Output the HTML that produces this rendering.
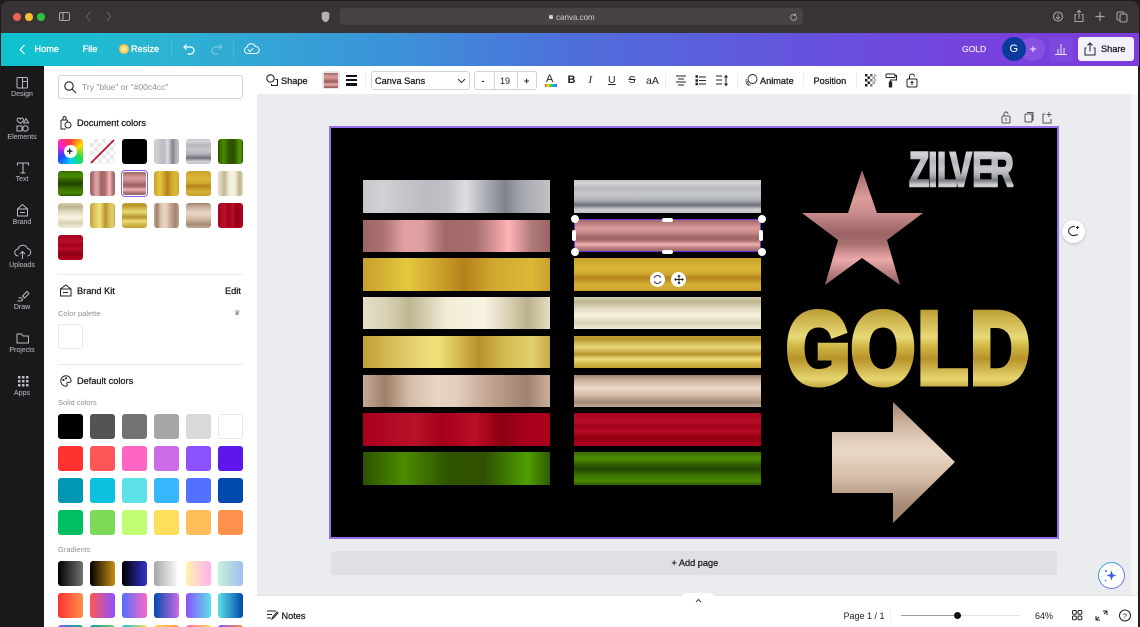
<!DOCTYPE html>
<html><head><meta charset="utf-8"><title>Canva</title>
<style>
*{box-sizing:border-box}
html,body{margin:0;padding:0;width:1140px;height:627px;overflow:hidden;background:#241a1d;font-family:"Liberation Sans",sans-serif}
.a{position:absolute}
.t{position:absolute;white-space:nowrap;line-height:12px}
.m{font-size:9.2px;font-weight:normal;-webkit-text-stroke:.28px currentColor}
#w{position:relative;width:1140px;height:627px;overflow:hidden;filter:blur(.3px)}
.s{position:absolute;width:25px;height:25px;border-radius:3px}
.b{position:absolute;width:187px;height:33px}
.n{position:absolute;left:0;width:44px;text-align:center;color:#a9abae;font-size:7px;line-height:8px;-webkit-text-stroke:.12px currentColor}
svg{position:absolute;overflow:visible}
:root{
--silver:#c5c7cb 0%,#d0d2d6 10%,#c4c6ca 22%,#b9bcc1 35%,#bfc1c6 45%,#dcdee1 55%,#a9acb3 66%,#80838c 76%,#a5a8ae 85%,#c0c2c6 100%;
--rose:#9c6565 0%,#a86f70 10%,#e0a0a3 22%,#dc9fa0 32%,#a06868 44%,#a66f6f 60%,#ffb3b5 78%,#b07a7a 90%,#9a6464 100%;
--gold:#c8a02b 0%,#d6b434 12%,#e4c83f 24%,#cda42c 40%,#b5811c 54%,#d0a92f 70%,#dbb936 90%,#c9a02c 100%;
--cream:#e5dfc6 0%,#d9d2b5 12%,#bfb693 25%,#f1edd8 45%,#f7f3e2 65%,#d9d0b4 78%,#bdb08d 88%,#e4dcc3 100%;
--gold2:#c2a032 0%,#d2b651 12%,#e5d572 28%,#f0e27a 40%,#b8922a 62%,#d2b94f 75%,#e2d06e 90%,#c9ab45 100%;
--bronze:#c4ab96 0%,#a17f6b 12%,#d5bda8 25%,#e7d5c4 40%,#e2cfbe 50%,#bf9f8a 70%,#a08270 88%,#c9af9b 100%;
--red:#a8001e 0%,#b7122a 28%,#a4001a 42%,#bc0d28 60%,#8c0010 74%,#a4001c 85%,#ad001f 100%;
--green:#2e5200 0%,#4a8c00 22%,#2f5500 45%,#305000 65%,#4ea000 88%,#2f5a00 100%;
--vsilver:#c4c6ca 0%,#d3d5d8 10%,#b4b7bc 25%,#c6c8cc 42%,#b0b3b8 60%,#6e7178 76%,#d0d2d6 90%,#c0c2c6 100%;
--vrose:#a06868 0%,#dc9c9c 25%,#c98b8c 38%,#9c6464 55%,#a76f70 64%,#f3b0b0 76%,#b67e7e 88%,#8f5e5e 100%;
--vgold:#c9a02a 0%,#d9b838 30%,#cfa82f 48%,#b5821c 60%,#d5b235 82%,#c9a02c 100%;
--vcream:#d8d0b0 0%,#bdb48f 15%,#e0d9c0 35%,#f8f4e2 58%,#d9d2b5 80%,#f0ecd8 100%;
--vgold2:#c2a032 0%,#b8962c 10%,#e8da78 35%,#b8922a 57%,#ecdc7a 72%,#d4bb4c 85%,#c2a032 100%;
--vbronze:#a08270 0%,#c8ad98 15%,#ead8c6 40%,#d6bda8 62%,#a68a76 85%,#c4ab96 100%;
--vred:#a8001e 0%,#b70f28 25%,#a4001a 40%,#b80a26 55%,#8c0010 75%,#a4001c 88%,#b00020 100%;
--vgreen:#3a6a00 0%,#4a9000 20%,#2f5c00 38%,#234400 52%,#3a7000 70%,#4a8800 88%,#2f5a00 100%;
}
.silver{background:linear-gradient(90deg,var(--silver))}.rose{background:linear-gradient(90deg,var(--rose))}.gold{background:linear-gradient(90deg,var(--gold))}.cream{background:linear-gradient(90deg,var(--cream))}.gold2{background:linear-gradient(90deg,var(--gold2))}.bronze{background:linear-gradient(90deg,var(--bronze))}.red{background:linear-gradient(90deg,var(--red))}.green{background:linear-gradient(90deg,var(--green))}
.vsilver{background:linear-gradient(180deg,var(--vsilver))}.vrose{background:linear-gradient(180deg,var(--vrose))}.vgold{background:linear-gradient(180deg,var(--vgold))}.vcream{background:linear-gradient(180deg,var(--vcream))}.vgold2{background:linear-gradient(180deg,var(--vgold2))}.vbronze{background:linear-gradient(180deg,var(--vbronze))}.vred{background:linear-gradient(180deg,var(--vred))}.vgreen{background:linear-gradient(180deg,var(--vgreen))}
.h{position:absolute;background:#fff}
.dot{position:absolute;width:8px;height:8px;border-radius:50%;background:#fff}
</style></head><body><div id="w">

<!-- browser chrome -->
<div class="a" style="left:1px;top:1px;width:1138px;height:32px;background:#383335;border-radius:8px 8px 0 0"></div>
<div class="a" style="left:13px;top:13px;width:7.500px;height:7.500px;border-radius:50%;background:#ee5f57"></div>
<div class="a" style="left:25px;top:13px;width:7.500px;height:7.500px;border-radius:50%;background:#f5bd2f"></div>
<div class="a" style="left:37px;top:13px;width:7.500px;height:7.500px;border-radius:50%;background:#29c440"></div>
<svg style="left:0;top:0" width="1140" height="33" fill="none" stroke="#a5a2a3" stroke-width="1.100">
<rect x="59.500" y="12.500" width="10" height="8" rx="1.500"/><path d="M63 12.500v8"/><path d="M90 12l-3.500 4.500 3.500 4.500" stroke="#615c5e"/><path d="M107 12l3.500 4.500-3.500 4.500" stroke="#615c5e"/>
<path d="M322 13l3.500-1.200 3.500 1.200v4.500c0 2.500-2 3.800-3.500 4.500-1.500-.7-3.500-2-3.500-4.500z" fill="#b5b2b3" stroke="#b5b2b3" stroke-width=".6"/>
<circle cx="1058" cy="16.500" r="4.500"/><path d="M1058 13.500v5M1056 17l2 2 2-2" stroke-width=".9"/>
<path d="M1076.500 14.500h-1.500v7h8v-7h-1.500M1079 18.500v-8M1077 12.500l2-2 2 2"/>
<path d="M1100 12v9M1095.500 16.500h9" stroke-width="1.200"/>
<rect x="1117" y="12" width="7" height="8" rx="1.500"/><rect x="1120" y="14" width="7" height="8" rx="1.500" fill="#383335"/>
</svg>
<div class="a" style="left:340px;top:8px;width:463px;height:17px;background:#474244;border-radius:4px"></div>
<div class="a" style="left:548.500px;top:15px;width:4px;height:4px;background:#cfcdce;border-radius:1px"></div>
<div class="t" style="left:556px;top:18px;margin-top:-6px;color:#cfcdce;font-size:8px">canva.com</div>
<svg style="left:790px;top:13px" width="8" height="8" fill="none" stroke="#a5a2a3" stroke-width=".9"><path d="M6.500 3.500a3 3 0 1 1-1-1.500M5.500 .5v2h-2"/></svg>

<!-- top bar -->
<div class="a" style="left:1px;top:33px;width:1138px;height:33px;background:linear-gradient(90deg,#0dc3cf 0%,#2db3d2 15%,#3c91d8 35%,#4e6fdb 50%,#6256dd 68%,#7542dc 85%,#7d3cdb 100%)"></div>
<svg style="left:0;top:33px" width="270" height="33" fill="none" stroke="#fff" stroke-width="1.200">
<path d="M24.500 12l-4.200 4.500 4.200 4.500"/>
<path d="M184.500 14h6a3.500 3.500 0 0 1 0 7h-3M186.500 11.500l-2.500 2.500 2.500 2.500"/>
<path d="M221.500 14h-6a3.500 3.500 0 0 0 0 7h3M219.500 11.500l2.500 2.500-2.500 2.500" stroke-opacity=".35"/>
<path d="M171.500 8v17M233.500 8v17" stroke-opacity=".15" stroke-width="1"/>
<path d="M247.500 20.500a3.200 3.200 0 0 1-.5-6.300 4.500 4.500 0 0 1 8.500-.7 3.500 3.500 0 0 1 .5 7z M248 16.500l2 2 3.200-3.200" stroke-width="1"/>
</svg>
<div class="t m" style="left:34.500px;top:43px;color:#fff">Home</div>
<div class="t m" style="left:82.500px;top:43px;color:#fff">File</div>
<div class="a" style="left:119px;top:44px;width:10px;height:10px;border-radius:50%;background:radial-gradient(#ffe9a0 20%,#f6b93b 70%)"></div>
<div class="t m" style="left:131px;top:43px;color:#fff">Resize</div>
<div class="t" style="left:962px;top:43px;color:#e9def8;font-size:8.500px;-webkit-text-stroke:.25px currentColor">GOLD</div>
<div class="a" style="left:1020px;top:37px;width:25px;height:24px;border-radius:12px;background:#8650e2"></div>
<div class="t" style="left:1029.500px;top:43px;color:#fff;font-size:12px">+</div>
<div class="a" style="left:1002px;top:37px;width:24px;height:24px;border-radius:50%;background:#0a3b9c"></div>
<div class="t" style="left:1009.500px;top:43px;color:#fff;font-size:11px">G</div>
<div class="a" style="left:1049px;top:37px;width:24px;height:24px;border-radius:3px;background:#7d48e0"></div>
<svg style="left:1055px;top:43px" width="13" height="12" fill="none" stroke="#ece3fb" stroke-width="1"><path d="M0 11.500h12M3 11V6M6 11V1M9 11V5"/></svg>
<div class="a" style="left:1078px;top:37px;width:56px;height:24px;border-radius:3px;background:#f4f0fc"></div>
<svg style="left:1084px;top:42px" width="13" height="14" fill="none" stroke="#222" stroke-width="1"><path d="M2.500 6H1v7h10V6H9.500M6 9.500V1M3.500 3.500L6 1l2.500 2.500"/></svg>
<div class="t m" style="left:1101px;top:43px;color:#222">Share</div>

<!-- sidebar -->
<div class="a" style="left:1px;top:66px;width:43px;height:561px;background:#18191b"></div>
<svg style="left:0;top:66px" width="44" height="340" fill="none" stroke="#b9bbbe" stroke-width="1">
<rect x="17" y="11.500" width="10.500" height="10.500" rx="1"/><path d="M22.500 11.500V22M22.500 15.500h5"/>
<path d="M17.500 55c-1-1.500 0-3 1.300-3 .8 0 1.200.5 1.500 1 .3-.5.700-1 1.500-1 1.300 0 2.300 1.500 1.300 3l-2.800 2.500zM26 52.500l2.500 4.500h-5z"/><rect x="17" y="60" width="5" height="5"/><circle cx="25.500" cy="62.500" r="2.700"/>
<path d="M17.500 99.500v-2.500h11v2.500M23 97v10M20.500 107h5" stroke-width="1.100"/>
<path d="M17.500 143h10v7h-10zM17.500 143l5-4.500 5 4.500M20 146.500h5"/>
<path d="M18.500 190a3.500 3.500 0 0 1-.5-7 5 5 0 0 1 9.500-.5 3.800 3.800 0 0 1 0 7.500M22.500 193v-7M20 188l2.500-2.500L25 188"/>
<path d="M22.500 230l4.500-4.500 2 2-4.500 4.500zM18.500 232c3-1 6 2 2.500 3h-3.500"/>
<path d="M17 277v-9h4.500l1.500 2h5.500v7z"/>
</svg>
<svg style="left:18px;top:376px" width="11" height="11" fill="#b9bbbe"><rect x="0" y="0" width="2.500" height="2.500"/><rect x="4" y="0" width="2.500" height="2.500"/><rect x="8" y="0" width="2.500" height="2.500"/><rect x="0" y="4" width="2.500" height="2.500"/><rect x="4" y="4" width="2.500" height="2.500"/><rect x="8" y="4" width="2.500" height="2.500"/><rect x="0" y="8" width="2.500" height="2.500"/><rect x="4" y="8" width="2.500" height="2.500"/><rect x="8" y="8" width="2.500" height="2.500"/></svg>
<div class="n" style="top:91px">Design</div>
<div class="n" style="top:134px">Elements</div>
<div class="n" style="top:176px">Text</div>
<div class="n" style="top:219px">Brand</div>
<div class="n" style="top:262px">Uploads</div>
<div class="n" style="top:304px">Draw</div>
<div class="n" style="top:347px">Projects</div>
<div class="n" style="top:390px">Apps</div>

<!-- panel -->
<div class="a" style="left:44px;top:66px;width:213px;height:561px;background:#fff"></div>
<div class="a" style="left:58px;top:75px;width:185px;height:24px;border:1px solid #d3d4d7;border-radius:3px"></div>
<svg style="left:64px;top:81px" width="13" height="13" fill="none" stroke="#222" stroke-width="1.100"><circle cx="5" cy="5" r="4.200"/><path d="M8 8l4 4"/></svg>
<div class="t" style="left:82px;top:81px;color:#8e9094;font-size:8.500px">Try "blue" or "#00c4cc"</div>
<svg style="left:60px;top:116px" width="12" height="14" fill="none" stroke="#222" stroke-width="1"><path d="M1 4h6l1 2M1 4v9h5M3 4V2a1.500 1.500 0 0 1 3 0v2"/><circle cx="8" cy="9" r="3"/></svg>
<div class="t m" style="left:77px;top:117px;color:#222">Document colors</div>

<div class="s" style="left:58px;top:139px;background:conic-gradient(#ff3b3b,#ffdd00,#22dd44,#00d0ff,#2244ff,#ff22cc,#ff3b3b)"></div>
<div class="a" style="left:64px;top:145px;width:13px;height:13px;border-radius:50%;background:#fff"></div>
<div class="t" style="left:66.500px;top:146px;color:#111;font-size:11px;font-weight:bold">+</div>
<div class="s" style="left:90px;top:139px;background:repeating-conic-gradient(#e9e9ea 0 25%,#fff 0 50%) 0 0/8px 8px"></div>
<svg style="left:90px;top:139px" width="25" height="25"><path d="M1 24L24 1" stroke="#c4102f" stroke-width="1.600"/></svg>
<div class="s" style="left:122px;top:139px;background:#000"></div>
<div class="s silver" style="left:154px;top:139px"></div>
<div class="s vsilver" style="left:186px;top:139px"></div>
<div class="s green" style="left:218px;top:139px"></div>

<div class="s vgreen" style="left:58px;top:171px"></div>
<div class="s rose" style="left:90px;top:171px"></div>
<div class="s vrose" style="left:122px;top:171px;border:1px solid #fff;outline:1.500px solid #8b5cf0;border-radius:3px"></div>
<div class="s gold" style="left:154px;top:171px"></div>
<div class="s vgold" style="left:186px;top:171px"></div>
<div class="s cream" style="left:218px;top:171px"></div>

<div class="s vcream" style="left:58px;top:203px"></div>
<div class="s gold2" style="left:90px;top:203px"></div>
<div class="s vgold2" style="left:122px;top:203px"></div>
<div class="s bronze" style="left:154px;top:203px"></div>
<div class="s vbronze" style="left:186px;top:203px"></div>
<div class="s red" style="left:218px;top:203px"></div>
<div class="s vred" style="left:58px;top:235px"></div>

<div class="a" style="left:58px;top:274px;width:185px;height:1px;background:#eceded"></div>
<svg style="left:60px;top:284px" width="12" height="13" fill="none" stroke="#222" stroke-width="1"><path d="M.5 5h10.500v7H.5zM.5 5l5.200-4 5.300 4M3 8.500h5"/></svg>
<div class="t m" style="left:77px;top:285px;color:#222">Brand Kit</div>
<div class="t m" style="left:225px;top:285px;color:#222">Edit</div>
<div class="t" style="left:58px;top:308px;color:#8e9094;font-size:7.500px">Color palette</div>
<div class="t" style="left:234px;top:308px;color:#777;font-size:7px">&#9819;</div>
<div class="s" style="left:58px;top:324px;border:1px solid #e8e8ea"></div>
<div class="a" style="left:58px;top:364px;width:185px;height:1px;background:#eceded"></div>
<svg style="left:60px;top:375px" width="12" height="12" fill="none" stroke="#222" stroke-width="1"><path d="M6 .8a5.200 5.200 0 1 0 0 10.400c1.500 0 1.500-1.200 1-2-.6-1 0-2 1-2h2c1 0 1.300-1 1-2C10.300 2.500 8.500.8 6 .8z"/><circle cx="3.500" cy="5" r=".6"/><circle cx="6" cy="3.300" r=".6"/></svg>
<div class="t m" style="left:77px;top:375px;color:#222">Default colors</div>
<div class="t" style="left:58px;top:397px;color:#8e9094;font-size:7.500px">Solid colors</div>

<div class="s" style="left:58px;top:414px;background:#000"></div><div class="s" style="left:90px;top:414px;background:#545454"></div><div class="s" style="left:122px;top:414px;background:#737373"></div><div class="s" style="left:154px;top:414px;background:#a6a6a6"></div><div class="s" style="left:186px;top:414px;background:#d9d9d9"></div><div class="s" style="left:218px;top:414px;background:#fff;border:1px solid #e8e8ea"></div>
<div class="s" style="left:58px;top:446px;background:#ff3131"></div><div class="s" style="left:90px;top:446px;background:#ff5757"></div><div class="s" style="left:122px;top:446px;background:#ff66c4"></div><div class="s" style="left:154px;top:446px;background:#cb6ce6"></div><div class="s" style="left:186px;top:446px;background:#8c52ff"></div><div class="s" style="left:218px;top:446px;background:#5e17eb"></div>
<div class="s" style="left:58px;top:478px;background:#0097b2"></div><div class="s" style="left:90px;top:478px;background:#0cc0df"></div><div class="s" style="left:122px;top:478px;background:#5ce1e6"></div><div class="s" style="left:154px;top:478px;background:#38b6ff"></div><div class="s" style="left:186px;top:478px;background:#5271ff"></div><div class="s" style="left:218px;top:478px;background:#004aad"></div>
<div class="s" style="left:58px;top:510px;background:#00bf63"></div><div class="s" style="left:90px;top:510px;background:#7ed957"></div><div class="s" style="left:122px;top:510px;background:#c1ff72"></div><div class="s" style="left:154px;top:510px;background:#ffde59"></div><div class="s" style="left:186px;top:510px;background:#ffbd59"></div><div class="s" style="left:218px;top:510px;background:#ff914d"></div>
<div class="t" style="left:58px;top:544px;color:#8e9094;font-size:7.500px">Gradients</div>
<div class="s" style="left:58px;top:561px;background:linear-gradient(90deg,#000,#737373)"></div><div class="s" style="left:90px;top:561px;background:linear-gradient(90deg,#000,#c89116)"></div><div class="s" style="left:122px;top:561px;background:linear-gradient(90deg,#000,#3533cd)"></div><div class="s" style="left:154px;top:561px;background:linear-gradient(90deg,#a6a6a6,#fff)"></div><div class="s" style="left:186px;top:561px;background:linear-gradient(90deg,#fff2b0,#ffb3ee)"></div><div class="s" style="left:218px;top:561px;background:linear-gradient(90deg,#c5f2d5,#9fbff5)"></div>
<div class="s" style="left:58px;top:593px;background:linear-gradient(90deg,#ff3131,#ff914d)"></div><div class="s" style="left:90px;top:593px;background:linear-gradient(90deg,#ff5757,#8c52ff)"></div><div class="s" style="left:122px;top:593px;background:linear-gradient(90deg,#5170ff,#ff66c4)"></div><div class="s" style="left:154px;top:593px;background:linear-gradient(90deg,#004aad,#cb6ce6)"></div><div class="s" style="left:186px;top:593px;background:linear-gradient(90deg,#8c52ff,#5ce1e6)"></div><div class="s" style="left:218px;top:593px;background:linear-gradient(90deg,#5ce1e6,#004aad)"></div>
<div class="s" style="left:58px;top:625px;background:linear-gradient(90deg,#8c52ff,#00bf63)"></div><div class="s" style="left:90px;top:625px;background:linear-gradient(90deg,#0097b2,#7ed957)"></div><div class="s" style="left:122px;top:625px;background:linear-gradient(90deg,#0cc0df,#ffde59)"></div><div class="s" style="left:154px;top:625px;background:linear-gradient(90deg,#ffde59,#ff914d)"></div><div class="s" style="left:186px;top:625px;background:linear-gradient(90deg,#ff66c4,#ffde59)"></div><div class="s" style="left:218px;top:625px;background:linear-gradient(90deg,#8c52ff,#ff914d)"></div>

<!-- editor area -->
<div class="a" style="left:257px;top:66px;width:881px;height:561px;background:#fff"></div>
<div class="a" style="left:257px;top:94px;width:874px;height:501px;background:#ebecf0"></div>
<div class="a" style="left:1131px;top:94px;width:7px;height:501px;background:#f5f5f7"></div>
<div class="a" style="left:1138px;top:66px;width:2px;height:561px;background:#2a1c1e"></div>

<!-- toolbar -->
<svg style="left:266px;top:74px" width="13" height="13" fill="none" stroke="#222" stroke-width="1.100"><circle cx="4.500" cy="4.500" r="3.700"/><path d="M9.500 5.500h2v6h-6v-1.500"/></svg>
<div class="t m" style="left:281px;top:74.500px;color:#222">Shape</div>
<div class="a" style="left:321.500px;top:71px;width:18px;height:18px;border-radius:3px;background:#e5e5e8"></div>
<div class="a vrose" style="left:323.500px;top:73px;width:14.500px;height:14.500px"></div>
<div class="a" style="left:346px;top:75px;width:11px;height:2px;background:#111"></div>
<div class="a" style="left:346px;top:79px;width:11px;height:2px;background:#111"></div>
<div class="a" style="left:346px;top:83px;width:11px;height:3px;background:#111"></div>
<div class="a" style="left:365px;top:73px;width:1px;height:15px;background:#eee"></div>
<div class="a" style="left:371px;top:71px;width:99px;height:19px;border:1px solid #d3d4d7;border-radius:3px"></div>
<div class="t m" style="left:375px;top:74.500px;color:#222">Canva Sans</div>
<svg style="left:457px;top:77.500px" width="9" height="6" fill="none" stroke="#333" stroke-width="1"><path d="M1 1l3.500 3.500L8 1"/></svg>
<div class="a" style="left:474px;top:71px;width:63px;height:19px;border:1px solid #d3d4d7;border-radius:3px"></div>
<div class="a" style="left:493.500px;top:71px;width:1px;height:19px;background:#d3d4d7"></div>
<div class="a" style="left:517px;top:71px;width:1px;height:19px;background:#d3d4d7"></div>
<div class="t" style="left:481.500px;top:74.500px;color:#222;font-size:9px;font-weight:bold">-</div>
<div class="t" style="left:500px;top:74.500px;color:#222;font-size:9px">19</div>
<div class="t" style="left:524px;top:74.500px;color:#222;font-size:9px;font-weight:bold">+</div>
<div class="t" style="left:546px;top:73px;color:#222;font-size:11px">A</div>
<div class="a" style="left:545px;top:84px;width:12px;height:3px;background:linear-gradient(90deg,#ff3b3b,#ffdd00,#22dd44,#00b0ff,#8844ff)"></div>
<div class="t" style="left:567.500px;top:74px;color:#222;font-size:11px;font-weight:bold">B</div>
<div class="t" style="left:588.500px;top:74px;color:#222;font-size:11px;font-style:italic;font-family:'Liberation Serif',serif">I</div>
<div class="t" style="left:608px;top:73.500px;color:#222;font-size:10.500px;text-decoration:underline">U</div>
<div class="t" style="left:628.500px;top:74px;color:#222;font-size:10.500px;text-decoration:line-through">S</div>
<div class="t" style="left:646px;top:74.500px;color:#222;font-size:10.500px">aA</div>
<div class="a" style="left:665px;top:73px;width:1px;height:15px;background:#eee"></div>
<svg style="left:675px;top:74px" width="70" height="14" fill="none" stroke="#222" stroke-width="1"><path d="M1 2h10M3 5h6M1 8h10M3 11h6"/><path d="M24 3h7M24 6.500h7M24 10h7"/><path d="M21 1.800h1.500v1.500H21zM21 5.800h1.500v1.500H21zM21 9.300h1.500v1.500H21z" fill="#222"/><path d="M41 2h6M41 6h6M41 10h6M51 2v9M49.500 3.500L51 1.500l1.500 2M49.500 9.500L51 11.500l1.500-2"/></svg>
<div class="a" style="left:737px;top:73px;width:1px;height:15px;background:#eee"></div>
<svg style="left:745px;top:73px" width="14" height="14" fill="none" stroke="#555" stroke-width=".9"><circle cx="7.500" cy="6" r="4.500" stroke="#222"/><path d="M2.500 8a5 5 0 0 0 3 4.500M1.300 6a6 6 0 0 0 2.500 7"/></svg>
<div class="t m" style="left:760px;top:74.500px;color:#222">Animate</div>
<div class="a" style="left:803px;top:73px;width:1px;height:15px;background:#eee"></div>
<div class="t m" style="left:813.500px;top:74.500px;color:#222">Position</div>
<div class="a" style="left:856px;top:73px;width:1px;height:15px;background:#eee"></div>
<svg style="left:865px;top:74px" width="12" height="13" fill="#222"><rect x="0" y="0" width="2.500" height="2.500"/><rect x="5" y="0" width="2.500" height="2.500" opacity=".7"/><rect x="9" y="0" width="2.500" height="2.500" opacity=".3"/><rect x="2.500" y="2.500" width="2.500" height="2.500"/><rect x="7.500" y="2.500" width="2.500" height="2.500" opacity=".4"/><rect x="0" y="5" width="2.500" height="2.500"/><rect x="5" y="5" width="2.500" height="2.500" opacity=".6"/><rect x="9" y="5" width="2.500" height="2.500" opacity=".3"/><rect x="2.500" y="7.500" width="2.500" height="2.500"/><rect x="7.500" y="7.500" width="2.500" height="2.500" opacity=".4"/><rect x="0" y="10" width="2.500" height="2.500"/><rect x="5" y="10" width="2.500" height="2.500" opacity=".6"/></svg>
<svg style="left:885px;top:73px" width="12" height="15" fill="none" stroke="#222" stroke-width="1"><rect x="1" y="1" width="9" height="3.500" rx=".8"/><path d="M10 2.500h1.500V7H5.500v2"/><rect x="4.300" y="9" width="2.400" height="5" fill="#222"/></svg>
<svg style="left:906px;top:73px" width="12" height="15" fill="none" stroke="#222" stroke-width="1"><rect x="1" y="6" width="10" height="8" rx="1"/><path d="M3.500 6V3.500a2.500 2.500 0 0 1 5 0M6 8.500v3.500M4.500 9.800L6 8.500l1.500 1.300"/></svg>

<!-- page controls -->
<svg style="left:1001px;top:111px" width="55" height="13" fill="none" stroke="#555" stroke-width="1"><rect x="1" y="5" width="8" height="7" rx="1"/><path d="M3 5V3a2 2 0 0 1 4 0M5 7v3"/><rect x="24" y="3" width="7" height="8" rx="1"/><path d="M26 1.500h6v8"/><path d="M44 3h-2v9h8V8M48 1v5M45.500 3.500h5"/></svg>

<!-- page -->
<div class="a" style="left:329px;top:126px;width:730px;height:413px;border:2px solid #9a70ea;background:#000"></div>

<!-- bars -->
<div class="b silver" style="left:363px;top:180px"></div>
<div class="b rose" style="left:363px;top:219.500px;height:32.500px"></div>
<div class="b gold" style="left:363px;top:258px;height:32.500px"></div>
<div class="b cream" style="left:363px;top:297px;height:32px"></div>
<div class="b gold2" style="left:363px;top:335.500px;height:32.500px"></div>
<div class="b bronze" style="left:363px;top:374.500px;height:32.500px"></div>
<div class="b red" style="left:363px;top:413px;height:32.500px"></div>
<div class="b green" style="left:363px;top:452px;height:32.500px"></div>
<div class="b vsilver" style="left:574px;top:180px"></div>
<div class="b vrose" style="left:574px;top:219.500px;height:32.500px"></div>
<div class="b vgold" style="left:574px;top:258px;height:32.500px"></div>
<div class="b vcream" style="left:574px;top:297px;height:32px"></div>
<div class="b vgold2" style="left:574px;top:335.500px;height:32.500px"></div>
<div class="b vbronze" style="left:574px;top:374.500px;height:32.500px"></div>
<div class="b vred" style="left:574px;top:413px;height:32.500px"></div>
<div class="b vgreen" style="left:574px;top:452px;height:32.500px"></div>

<!-- selection -->
<div class="a" style="left:574px;top:218.500px;width:187px;height:33.500px;border:1px solid #6a2fe0"></div>
<div class="dot" style="left:570.500px;top:215px"></div><div class="dot" style="left:757.500px;top:215px"></div><div class="dot" style="left:570.500px;top:248px"></div><div class="dot" style="left:757.500px;top:248px"></div>
<div class="h" style="left:662px;top:218px;width:11px;height:4px;border-radius:2px"></div>
<div class="h" style="left:662px;top:250px;width:11px;height:4px;border-radius:2px"></div>
<div class="h" style="left:572px;top:230px;width:4px;height:11px;border-radius:2px"></div>
<div class="h" style="left:759px;top:230px;width:4px;height:11px;border-radius:2px"></div>
<div class="a" style="left:649.500px;top:272px;width:15px;height:15px;border-radius:50%;background:#fff"></div>
<div class="a" style="left:671px;top:272px;width:15px;height:15px;border-radius:50%;background:#fff"></div>
<svg style="left:649.500px;top:272px" width="37" height="15" fill="none" stroke="#333" stroke-width=".9"><path d="M4 6a3.700 3.700 0 0 1 6-1.500L11 5.500M11 9a3.700 3.700 0 0 1-6 1.500L4 9.500"/><path d="M29 3.500v8M25 7.500h8M27.800 4.500L29 3.300l1.200 1.200M27.800 10.500L29 11.700l1.200-1.200M26 6.300L24.800 7.500 26 8.700M32 6.300l1.200 1.200L32 8.700" stroke="#222"/></svg>

<!-- artwork -->
<svg style="left:0;top:0" width="1140" height="627">
<defs>
<linearGradient id="gS" gradientUnits="userSpaceOnUse" x1="0" y1="150" x2="0" y2="188"><stop offset="0" stop-color="#c4c6ca"/><stop offset=".1" stop-color="#d3d5d8"/><stop offset=".3" stop-color="#b4b7bc"/><stop offset=".5" stop-color="#c6c8cc"/><stop offset=".65" stop-color="#b0b3b8"/><stop offset=".8" stop-color="#7a7d84"/><stop offset=".92" stop-color="#d0d2d6"/><stop offset="1" stop-color="#c0c2c6"/></linearGradient>
<linearGradient id="gR" x1="0" y1="0" x2="0" y2="1"><stop offset="0" stop-color="#a06868"/><stop offset=".25" stop-color="#dc9c9c"/><stop offset=".38" stop-color="#c98b8c"/><stop offset=".55" stop-color="#9c6464"/><stop offset=".64" stop-color="#a76f70"/><stop offset=".78" stop-color="#eeaaaa"/><stop offset=".9" stop-color="#b67e7e"/><stop offset="1" stop-color="#8f5e5e"/></linearGradient>
<linearGradient id="gG" gradientUnits="userSpaceOnUse" x1="0" y1="306" x2="0" y2="387"><stop offset="0" stop-color="#b8962c"/><stop offset=".38" stop-color="#e8da78"/><stop offset=".48" stop-color="#d4bc4a"/><stop offset=".65" stop-color="#b8922a"/><stop offset=".9" stop-color="#e6d66f"/><stop offset="1" stop-color="#c9ab45"/></linearGradient>
<linearGradient id="gB" x1="0" y1="0" x2="0" y2="1"><stop offset="0" stop-color="#a08270"/><stop offset=".15" stop-color="#c8ad98"/><stop offset=".3" stop-color="#e0cbb8"/><stop offset=".4" stop-color="#ead8c6"/><stop offset=".62" stop-color="#d6bda8"/><stop offset=".85" stop-color="#a68a76"/><stop offset="1" stop-color="#a08270"/></linearGradient>
</defs>
<polygon points="862,170 877,213 923,213 887,240 900,285 862,258 825,285 838,240 802,213 848,213" fill="url(#gR)"/>
<polygon points="832,432 893,432 893,402 955,462 893,523 893,493 832,493" fill="url(#gB)"/>
<text transform="scale(.68 1)" x="1337 1365 1378 1397 1430 1456" y="186" font-family="Liberation Sans" font-size="48" font-weight="bold" fill="url(#gS)" stroke="url(#gS)" stroke-width="2.500" stroke-linejoin="miter" stroke-miterlimit="2">ZILVER</text>
<text transform="scale(.81 1)" x="971 1051 1133 1198" y="383" font-family="Liberation Sans" font-size="101" font-weight="bold" fill="url(#gG)" stroke="url(#gG)" stroke-width="7" stroke-linejoin="miter" stroke-miterlimit="2">GOLD</text>
</svg>

<!-- comment button -->
<div class="a" style="left:1062px;top:220px;width:23px;height:23px;border-radius:50%;background:#fff;box-shadow:0 1px 3px rgba(0,0,0,.2)"></div>
<svg style="left:1067px;top:225px" width="14" height="13" fill="none" stroke="#222" stroke-width="1"><path d="M8 1.700A5 4.500 0 1 0 9 10l2-.2M10.500 1v3M9 2.500h3"/></svg>

<!-- add page -->
<div class="a" style="left:331px;top:551px;width:726px;height:24px;border-radius:3px;background:#dfe0e4"></div>
<div class="t m" style="left:671.500px;top:557px;color:#222">+ Add page</div>
<div class="a" style="left:1098px;top:562px;width:27px;height:27px;border-radius:50%;background:linear-gradient(135deg,#2bbbd0,#8b5cf0);padding:1px"><div style="width:25px;height:25px;border-radius:50%;background:#fff"></div></div>
<svg style="left:1104px;top:569px" width="14" height="14" fill="#3f5fd8"><path d="M7.500 1.500l1.300 3.700 3.700 1.300-3.700 1.300-1.300 3.700-1.300-3.700L2.500 6.500l3.700-1.300z"/><circle cx="2" cy="2" r="1"/><circle cx="1.500" cy="11.500" r=".8"/></svg>

<!-- bottom bar -->
<div class="a" style="left:257px;top:595px;width:881px;height:32px;background:#fff;border-top:1px solid #e4e5e8"></div>
<div class="a" style="left:678px;top:593px;width:40px;height:10px;border-radius:10px 10px 0 0;background:#fff"></div>
<svg style="left:695px;top:598px" width="7" height="5" fill="none" stroke="#444" stroke-width="1"><path d="M1 4l2.500-2.500L6 4"/></svg>
<svg style="left:267px;top:610px" width="12" height="10" fill="none" stroke="#222" stroke-width="1"><path d="M0 1h9M0 4.500h5M0 8h4M5 9l1-2.500 4-4.500 1 1-4 4.500z"/></svg>
<div class="t m" style="left:281.500px;top:609.500px;color:#222">Notes</div>
<div class="t" style="left:843.500px;top:609.500px;color:#222;font-size:9px">Page 1 / 1</div>
<div class="a" style="left:890px;top:608px;width:1px;height:13px;background:#eee"></div>
<div class="a" style="left:901px;top:614.500px;width:119px;height:1.500px;background:#e2e3e5"></div>
<div class="a" style="left:901px;top:614.500px;width:56px;height:1.500px;background:#9d9d9f"></div>
<div class="a" style="left:953.500px;top:611.500px;width:7px;height:7px;border-radius:50%;background:#111"></div>
<div class="t" style="left:1035px;top:609.500px;color:#222;font-size:9px">64%</div>
<svg style="left:1072px;top:610px" width="70" height="12" fill="none" stroke="#222" stroke-width="1"><rect x=".5" y=".5" width="3.800" height="3.800" rx="1"/><rect x="6" y=".5" width="3.800" height="3.800" rx="1"/><rect x=".5" y="6" width="3.800" height="3.800" rx="1"/><rect x="6" y="6" width="3.800" height="3.800" rx="1"/><path d="M31 1h4v4M35 1l-3 3M28 10h-4V6M24 10l3-3"/><circle cx="53" cy="5.500" r="5.500"/><text x="50.800" y="8.500" font-size="7.500" font-family="Liberation Sans" fill="#222" stroke="none">?</text></svg>

</div></body></html>
